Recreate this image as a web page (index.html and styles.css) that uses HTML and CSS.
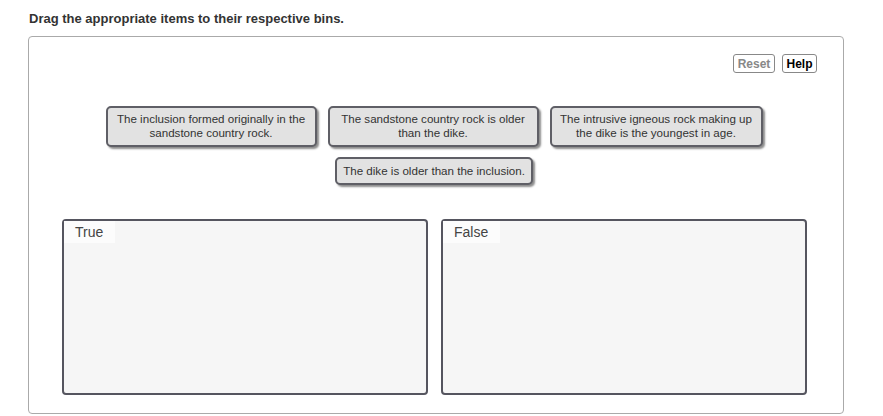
FILE: index.html
```html
<!DOCTYPE html>
<html>
<head>
<meta charset="utf-8">
<link rel="stylesheet" href="styles.css">
</head>
<body>
<div class="prompt">Drag the appropriate items to their respective bins.</div>
<div class="panel">
  <div class="toolbar">
    <button class="btn btn-reset">Reset</button>
    <button class="btn btn-help">Help</button>
  </div>
  <div class="items">
    <div class="row">
      <div class="item wide">The inclusion formed originally in the sandstone country rock.</div>
      <div class="item wide">The sandstone country rock is older than the dike.</div>
      <div class="item wide w3">The intrusive igneous rock making up the dike is the youngest in age.</div>
    </div>
    <div class="row">
      <div class="item">The dike is older than the inclusion.</div>
    </div>
  </div>
  <div class="bins">
    <div class="bin"><span class="bin-label">True</span></div>
    <div class="bin"><span class="bin-label">False</span></div>
  </div>
</div>
</body>
</html>
```
FILE: styles.css
```css
html, body {
  margin: 0;
  padding: 0;
  background: #fff;
  font-family: "Liberation Sans", Arial, sans-serif;
}
.prompt {
  font-size: 13px;
  font-weight: bold;
  color: #333;
  padding: 11px 0 0 29px;
  line-height: 16px;
  height: 25px;
}
.panel {
  margin-left: 28px;
  width: 814px;
  height: 376px;
  border: 1px solid #aaa;
  border-radius: 4px;
  box-sizing: content-box;
}
.toolbar {
  display: flex;
  justify-content: flex-end;
  gap: 7px;
  padding: 17px 26px 0 0;
}
.btn {
  font-family: "Liberation Sans", Arial, sans-serif;
  font-size: 12px;
  font-weight: bold;
  background: #fff;
  border: 1px solid #888;
  border-radius: 3px;
  height: 19px;
  padding: 0 3px;
  line-height: 16px;
  margin: 0;
}
.btn-reset { color: #888; width: 42px; }
.btn-help { color: #000; width: 35px; }
.items {
  display: flex;
  flex-direction: column;
  align-items: center;
  gap: 10px;
  margin-top: 33px;
  padding-right: 4px;
}
.row {
  display: flex;
  justify-content: center;
  gap: 11px;
}
.item {
  background: #e2e2e2;
  border: 2px solid #5f5f66;
  border-radius: 5px;
  box-shadow: 2px 2px 2px rgba(0,0,0,0.45);
  font-size: 11.6px;
  line-height: 14px;
  color: #333;
  text-align: center;
  padding: 5px 6px;
}
.item.wide { width: 195px; padding-top: 4px; padding-bottom: 5px; }
.item.w3 { width: 197px; }
.bins {
  display: flex;
  justify-content: center;
  gap: 13px;
  margin-top: 34px;
  padding-right: 3px;
}
.bin {
  width: 362px;
  height: 172px;
  background: #f6f6f6;
  border: 2px solid #55555f;
  border-radius: 4px;
}
.bin-label {
  display: inline-block;
  background: #fcfcfc;
  color: #444;
  font-size: 14px;
  line-height: 22px;
  padding: 0 12px 0 11px;
}
```
